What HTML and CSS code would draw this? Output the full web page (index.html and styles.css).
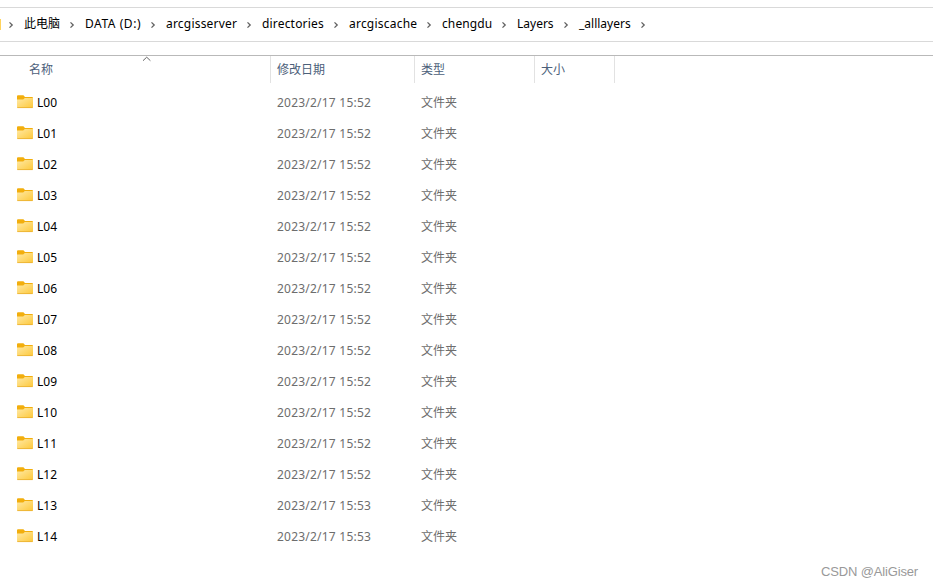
FILE: index.html
```
<!DOCTYPE html>
<html lang="zh-CN">
<head>
<meta charset="utf-8">
<title>_alllayers</title>
<link rel="stylesheet" href="styles.css">
</head>
<body>
<svg class="defs" width="0" height="0" aria-hidden="true">
  <defs>
    <linearGradient id="front" x1="0" y1="0" x2="1" y2="1">
      <stop offset="0" stop-color="#ffe9a5"/>
      <stop offset="1" stop-color="#fdc83a"/>
    </linearGradient>
    <symbol id="folder" viewBox="0 0 16 14">
      <path d="M0 1.2Q0 .2 1 .2H6.4L8 2H15Q16 2 16 3V7H0Z" fill="#f2ae0d"/>
      <path d="M0 4.4H6.2L7.8 3H16V12Q16 13 15 13H1Q0 13 0 12Z" fill="url(#front)"/>
      <path d="M.3 12.6H15.7" stroke="#e9ad2d" stroke-width=".8"/>
    </symbol>
    <symbol id="chevron" viewBox="0 0 6 8">
      <path d="M1.5 1.4L4.2 4L1.5 6.6" fill="none" stroke="#606060" stroke-width="1.3"/>
    </symbol>
  </defs>
</svg>
<main class="window">
  <nav class="path">
    <span class="edge"></span>
    <svg class="chev first"><use href="#chevron"/></svg>
    <span class="crumb pc">此电脑</span><svg class="chev"><use href="#chevron"/></svg>
    <span class="crumb drive">DATA (D:)</span><svg class="chev"><use href="#chevron"/></svg>
    <span class="crumb server">arcgisserver</span><svg class="chev"><use href="#chevron"/></svg>
    <span class="crumb dirs">directories</span><svg class="chev"><use href="#chevron"/></svg>
    <span class="crumb cache">arcgiscache</span><svg class="chev"><use href="#chevron"/></svg>
    <span class="crumb city">chengdu</span><svg class="chev"><use href="#chevron"/></svg>
    <span class="crumb layers">Layers</span><svg class="chev"><use href="#chevron"/></svg>
    <span class="crumb all">_alllayers</span><svg class="chev"><use href="#chevron"/></svg>
  </nav>
  <header class="heads">
    <div class="head name">名称<svg class="sort" viewBox="0 0 10 6"><path d="M1 4.7L4.7 1.2L8.4 4.7" fill="none" stroke="#666" stroke-width="1"/></svg></div>
    <div class="head">修改日期</div>
    <div class="head">类型</div>
    <div class="head">大小</div>
  </header>
  <section class="files">
    <div class="row"><svg class="icon"><use href="#folder"/></svg><span class="label">L00</span><span class="date">2023/2/17 15:52</span><span class="type">文件夹</span></div>
    <div class="row"><svg class="icon"><use href="#folder"/></svg><span class="label">L01</span><span class="date">2023/2/17 15:52</span><span class="type">文件夹</span></div>
    <div class="row"><svg class="icon"><use href="#folder"/></svg><span class="label">L02</span><span class="date">2023/2/17 15:52</span><span class="type">文件夹</span></div>
    <div class="row"><svg class="icon"><use href="#folder"/></svg><span class="label">L03</span><span class="date">2023/2/17 15:52</span><span class="type">文件夹</span></div>
    <div class="row"><svg class="icon"><use href="#folder"/></svg><span class="label">L04</span><span class="date">2023/2/17 15:52</span><span class="type">文件夹</span></div>
    <div class="row"><svg class="icon"><use href="#folder"/></svg><span class="label">L05</span><span class="date">2023/2/17 15:52</span><span class="type">文件夹</span></div>
    <div class="row"><svg class="icon"><use href="#folder"/></svg><span class="label">L06</span><span class="date">2023/2/17 15:52</span><span class="type">文件夹</span></div>
    <div class="row"><svg class="icon"><use href="#folder"/></svg><span class="label">L07</span><span class="date">2023/2/17 15:52</span><span class="type">文件夹</span></div>
    <div class="row"><svg class="icon"><use href="#folder"/></svg><span class="label">L08</span><span class="date">2023/2/17 15:52</span><span class="type">文件夹</span></div>
    <div class="row"><svg class="icon"><use href="#folder"/></svg><span class="label">L09</span><span class="date">2023/2/17 15:52</span><span class="type">文件夹</span></div>
    <div class="row"><svg class="icon"><use href="#folder"/></svg><span class="label">L10</span><span class="date">2023/2/17 15:52</span><span class="type">文件夹</span></div>
    <div class="row"><svg class="icon"><use href="#folder"/></svg><span class="label">L11</span><span class="date">2023/2/17 15:52</span><span class="type">文件夹</span></div>
    <div class="row"><svg class="icon"><use href="#folder"/></svg><span class="label">L12</span><span class="date">2023/2/17 15:52</span><span class="type">文件夹</span></div>
    <div class="row"><svg class="icon"><use href="#folder"/></svg><span class="label">L13</span><span class="date">2023/2/17 15:53</span><span class="type">文件夹</span></div>
    <div class="row"><svg class="icon"><use href="#folder"/></svg><span class="label">L14</span><span class="date">2023/2/17 15:53</span><span class="type">文件夹</span></div>
  </section>
  <div class="watermark">CSDN @AliGiser</div>
</main>
</body>
</html>
```
FILE: styles.css
```
* { box-sizing: border-box; }
body {
  margin: 0;
  background: #fff;
  color: #000;
  font: 12px/18px "Noto Sans", "Noto Sans CJK SC", sans-serif;
  overflow: hidden;
}
.defs { position: absolute; }
.window {
  position: relative;
  height: 586px;
  padding-top: 7px;
}
.path {
  display: flex;
  align-items: center;
  height: 35px;
  border-top: 1px solid #d9d9d9;
  border-bottom: 1px solid #d9d9d9;
  padding-bottom: 1px;
  white-space: nowrap;
}
.edge {
  width: 1px;
  height: 11px;
  background: #ffd35c;
}
.chev {
  flex: none;
  width: 6px;
  height: 8px;
  margin: 1px 10px 0 9px;
}
.chev.first { margin-left: 7px; }
.crumb { flex: none; }
.pc { width: 36px; }
.drive { width: 56px; letter-spacing: 0.55px; }
.server { width: 71px; letter-spacing: 0.2px; }
.dirs { width: 62px; letter-spacing: 0.18px; }
.cache { width: 68px; letter-spacing: 0.22px; }
.city { width: 50px; letter-spacing: 0.1px; }
.layers { width: 37px; }
.all { width: 52px; }
.heads {
  display: grid;
  grid-template-columns: 271px 144px 120px 80px;
  height: 28px;
  margin-top: 13px;
  border-top: 1px solid #b9b9b9;
  color: #4c607a;
}
.head {
  position: relative;
  padding: 5px 0 0 6px;
  border-right: 1px solid #e2e2e2;
}
.head.name { padding-left: 29px; }
.sort {
  position: absolute;
  left: 142px;
  top: 0;
  width: 10px;
  height: 6px;
}
.files { padding-top: 4px; }
.row {
  display: grid;
  grid-template-columns: 16px 240px 144px 120px;
  align-items: center;
  height: 31px;
  padding-left: 17px;
}
.icon {
  width: 16px;
  height: 14px;
  margin-bottom: 1px;
}
.label { padding-left: 4px; }
.date, .type { padding-left: 4px; color: #6d6d6d; }
.date { letter-spacing: 0.22px; }
.type { padding-top: 1px; }
.watermark {
  position: absolute;
  left: 821px;
  top: 563px;
  color: #999;
  font: 13px/17px "Liberation Sans", sans-serif;
  letter-spacing: -0.15px;
  white-space: nowrap;
}
```
